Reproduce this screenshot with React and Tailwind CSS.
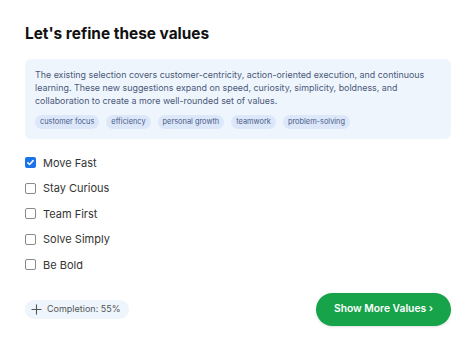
import React from 'react';

const tags = ["customer focus", "efficiency", "personal growth", "teamwork", "problem-solving"];

const values = [
  { label: "Move Fast", checked: true },
  { label: "Stay Curious", checked: false },
  { label: "Team First", checked: false },
  { label: "Solve Simply", checked: false },
  { label: "Be Bold", checked: false },
];

const CheckRow = ({ label, checked }) => (
  <label className="flex items-center gap-[7px] h-[25.5px] text-[11px] text-[#333]">
    {checked ? (
      <span className="w-[11px] h-[11px] rounded-[2px] bg-[#1a73e8] flex items-center justify-center">
        <svg viewBox="0 0 12 12" className="w-[9px] h-[9px]" fill="none" stroke="white" strokeWidth={2} strokeLinecap="round" strokeLinejoin="round">
          <path d="M2.5 6.5l2.3 2.2L9.5 3.5" />
        </svg>
      </span>
    ) : (
      <span className="w-[11px] h-[11px] rounded-[2px] border border-[#8a8a8a] bg-white" />
    )}
    <span>{label}</span>
  </label>
);

export default function App() {
  return (
    <div className="w-[474px] h-[346px] bg-white pl-[25px] pr-[23px] pt-[24px] font-['Inter',sans-serif]">
      <h1 className="text-[15.4px] leading-[20px] font-bold text-[#111]">Let's refine these values</h1>

      <div className="mt-[15px] rounded-[6px] bg-[#eef5fd] px-[10px] pt-[9px] pb-[10px]">
        <p className="text-[8.9px] leading-[13px] text-[#4a5878]">
          The existing selection covers customer-centricity, action-oriented execution, and continuous
          learning. These new suggestions expand on speed, curiosity, simplicity, boldness, and
          collaboration to create a more well-rounded set of values.
        </p>
        <div className="mt-[8px] flex gap-[7px]">
          {tags.map((t) => (
            <span key={t} className="rounded-full bg-[#dce8fa] px-[5px] h-[14px] flex items-center text-[7.4px] text-[#4a5a86]">
              {t}
            </span>
          ))}
        </div>
      </div>

      <div className="mt-[11px] flex flex-col">
        {values.map((v) => (
          <CheckRow key={v.label} {...v} />
        ))}
      </div>

      <div className="mt-[15px] flex items-center justify-between">
        <span className="flex items-center gap-[5px] rounded-full bg-[#eef5fd] h-[19px] pl-[6px] pr-[8px] text-[9px] text-[#555]">
          <svg viewBox="0 0 12 12" className="w-[11px] h-[11px]" fill="none" stroke="#555" strokeWidth={1.2} strokeLinecap="round">
            <path d="M6 1v10M1 6h10" />
          </svg>
          Completion: 55%
        </span>
        <button className="h-[33px] w-[135px] rounded-full bg-[#16a34a] text-white text-[10.3px] font-semibold shadow-sm">
          Show More Values ›
        </button>
      </div>
    </div>
  );
}
